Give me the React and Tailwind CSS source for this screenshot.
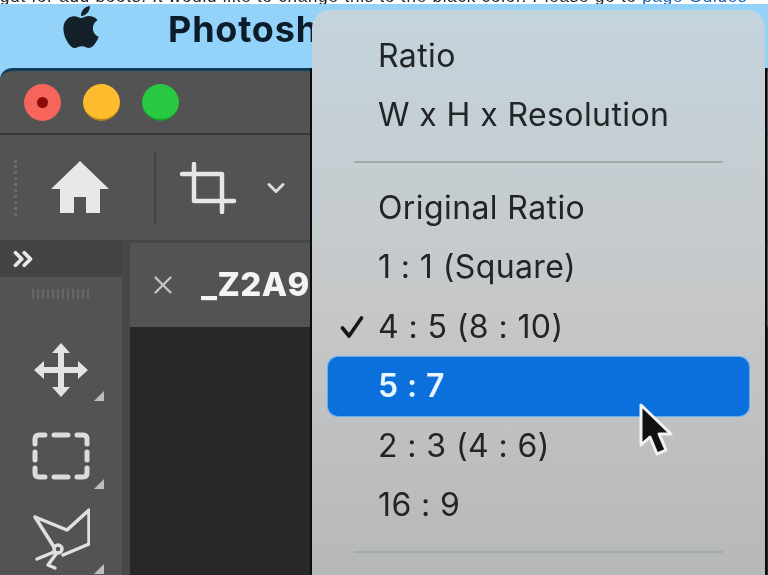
import { ChevronDown, ChevronsRight, X } from "lucide-react"
import { FaApple } from "react-icons/fa"

const font = { fontFamily: '"Inter", "Liberation Sans", sans-serif' }

function MenuRow({ label, checked, active }) {
    return (
        <div className={`relative flex items-center h-[59.5px] mx-[16px] rounded-[10px] pl-[50px] ${active ? "bg-[#0b6fdc] ring-1 ring-[#62aef2] text-[#e9f6ff] font-semibold" : "text-[#222426]"}`}>
            {checked && (
                <svg viewBox="0 0 24 24" className="absolute left-[12px] top-[18px] w-[24px] h-[24px]" fill="none" stroke="#161616" strokeWidth="3.6" strokeLinecap="round" strokeLinejoin="round">
                    <path d="M2.5 13l6.5 8L21.5 3" />
                </svg>
            )}
            <span>{label}</span>
        </div>
    )
}

function Separator() {
    return <div className="h-[2px] bg-[#a4a9ac] mx-[42px] my-[15.5px]"></div>
}

function Corner({ offset }) {
    return <div className={`absolute right-[18px] w-0 h-0 border-l-[10px] border-l-transparent border-b-[10px] border-b-[#bdbdbd] ${offset}`}></div>
}

function MoveIcon() {
    return (
        <svg viewBox="0 0 54 54" className="w-[54px] h-[54px]" fill="#e4e4e4">
            <path d="M27 0l9 10h-6v14h14v-6l10 9-10 9v-6H30v14h6l-9 10-9-10h6V30H10v6L0 27l10-9v6h14V10h-6z" />
        </svg>
    )
}

function MarqueeIcon() {
    return (
        <svg viewBox="0 0 58 48" className="w-[58px] h-[48px]" fill="none" stroke="#dcdcdc" strokeWidth="5" strokeLinecap="round">
            <path d="M3 12V7q0-4 4-4h6M45 3h6q4 0 4 4v5M3 36v5q0 4 4 4h6M45 45h6q4 0 4-4v-5M22 3h14M22 45h14M3 20v8M55 20v8" />
        </svg>
    )
}

function LassoIcon() {
    return (
        <svg viewBox="0 0 58 64" className="w-[58px] h-[64px]" fill="none" stroke="#e0e0e0" strokeWidth="3.5" strokeLinejoin="round" strokeLinecap="round">
            <path d="M3 10l32 13L57 3v34L31 48M3 10l19 30" />
            <circle cx="26" cy="42" r="4" />
            <path d="M22 45L5 52M24 47l-8 11 7 3" />
        </svg>
    )
}

function CropIcon() {
    return (
        <svg viewBox="0 0 58 52" className="ml-[23px] w-[58px] h-[52px]" fill="none" stroke="#e6e6e6" strokeWidth="4.5" strokeLinecap="round" strokeLinejoin="round">
            <path d="M3 12h40v38M15 2v37h40" />
        </svg>
    )
}

function Tool({ children, height, offset }) {
    return (
        <div className={`relative flex items-center justify-center ${height}`}>
            {children}
            <Corner offset={offset} />
        </div>
    )
}

export default function App() {
    return (
        <div className="relative w-[768px] h-[575px] overflow-hidden bg-[#93d3fa] blur-[0.6px]" style={font}>
            <div className="h-[4px] overflow-hidden bg-white text-[#222] text-[17px] leading-[17px] whitespace-nowrap tracking-[0.8px]" style={{ fontFamily: '"Liberation Sans", sans-serif' }}>
                <div className="mt-[-12px]">gut for add boots. It would like to change this to the black color. Please go to <span className="text-[#1a5fa8]">page Guides</span></div>
            </div>

            <div className="flex items-center h-[64px] rounded-tl-[14px] bg-[#93d3fa] text-[#0c1c2a]">
                <FaApple className="ml-[59px] mb-[18px] w-[44px] h-[48px]" color="#15212a" />
                <span className="ml-[65px] mb-[14px] text-[36px] font-bold tracking-[0.8px]">Photoshop</span>
            </div>

            <div className="flex flex-col h-[507px] rounded-tl-[12px] border-t-[3px] border-[#0f3d5e] bg-[#535353]">
                <div className="flex items-center gap-[22px] h-[64px] pl-[24px] border-b-[2px] border-[#3a3a3a] shrink-0">
                    <div className="flex items-center justify-center w-[37px] h-[37px] rounded-full bg-[#f5655c]">
                        <div className="w-[11px] h-[11px] rounded-full bg-[#8c0a0a]"></div>
                    </div>
                    <div className="w-[37px] h-[37px] rounded-full bg-[#fdbb2e] border-b-[2px] border-[#b8801a]"></div>
                    <div className="w-[37px] h-[37px] rounded-full bg-[#28c840] border-b-[2px] border-[#1b9a2e]"></div>
                </div>

                <div className="flex items-center h-[105px] shrink-0">
                    <div className="ml-[14px] w-[4px] h-[56px] border-l-[3px] border-dotted border-[#6a6a6a]"></div>
                    <svg viewBox="0 0 58 54" className="ml-[33px] w-[58px] h-[54px]" fill="#e8e8e8">
                        <path d="M29 0l29 28h-9v24H35V36H23v16H9V28H0z" />
                    </svg>
                    <div className="ml-[45px] w-[2px] h-[72px] bg-[#444]"></div>
                    <CropIcon />
                    <ChevronDown className="ml-[25px] w-[28px] h-[28px]" strokeWidth={2.6} color="#dcdcdc" />
                </div>

                <div className="flex flex-1 min-h-0">
                    <div className="flex flex-col w-[122px] shrink-0">
                        <div className="flex items-center h-[37px] pl-[8px] bg-[#444444]">
                            <ChevronsRight className="w-[30px] h-[30px]" strokeWidth={3} color="#e8e8e8" />
                        </div>
                        <div className="mx-[32px] mt-[12px] mb-[44px] h-[10px] bg-[repeating-linear-gradient(90deg,#666666_0,#666666_2px,transparent_2px,transparent_5px)]"></div>
                        <Tool height="h-[54px]" offset="bottom-[-4px]"><MoveIcon /></Tool>
                        <div className="h-[35px]"></div>
                        <Tool height="h-[48px]" offset="bottom-[-9px]"><MarqueeIcon /></Tool>
                        <div className="h-[27px]"></div>
                        <Tool height="h-[64px]" offset="bottom-[-3px]"><LassoIcon /></Tool>
                    </div>

                    <div className="w-[8px] shrink-0 bg-[#474747]"></div>

                    <div className="flex flex-col flex-1 bg-[#474747] pt-[3px]">
                        <div className="flex items-center h-[84px] bg-[#535353] shrink-0">
                            <X className="ml-[18px] w-[30px] h-[30px]" strokeWidth={1.8} color="#c6c6c6" />
                            <span className="ml-[23px] text-[33px] font-extrabold text-[#f4f4f4] tracking-[0.4px] whitespace-nowrap">_Z2A95</span>
                        </div>
                        <div className="flex-1 bg-[#282828]"></div>
                    </div>
                </div>
            </div>

            <div className="absolute left-[312px] top-[10px] bottom-[-4px] w-[453px] pt-[16px] rounded-t-[18px] bg-gradient-to-b from-[#c4d4dd] via-[#c6c8c9] to-[#b5b7b8] text-[32px] tracking-[0.4px]">
                <div className="absolute left-[-2px] top-[58px] bottom-0 w-[2px] bg-[#0c0c0c]"></div>
                <div className="absolute right-[-2px] top-[58px] bottom-0 w-[2px] bg-[#0c0c0c]"></div>
                <MenuRow label="Ratio" />
                <MenuRow label="W x H x Resolution" />
                <Separator />
                <MenuRow label="Original Ratio" />
                <MenuRow label="1 : 1 (Square)" />
                <MenuRow label="4 : 5 (8 : 10)" checked />
                <MenuRow label="5 : 7" active />
                <MenuRow label="2 : 3 (4 : 6)" />
                <MenuRow label="16 : 9" />
                <Separator />
            </div>

            <svg viewBox="0 0 36 56" className="absolute left-[638px] top-[403px] w-[36px] h-[56px]">
                <path d="M3 2v40l9-8 7 17 9-4-7-16h12z" fill="#111" stroke="#f2f2f2" strokeWidth="3" strokeLinejoin="round" />
            </svg>
        </div>
    )
}
